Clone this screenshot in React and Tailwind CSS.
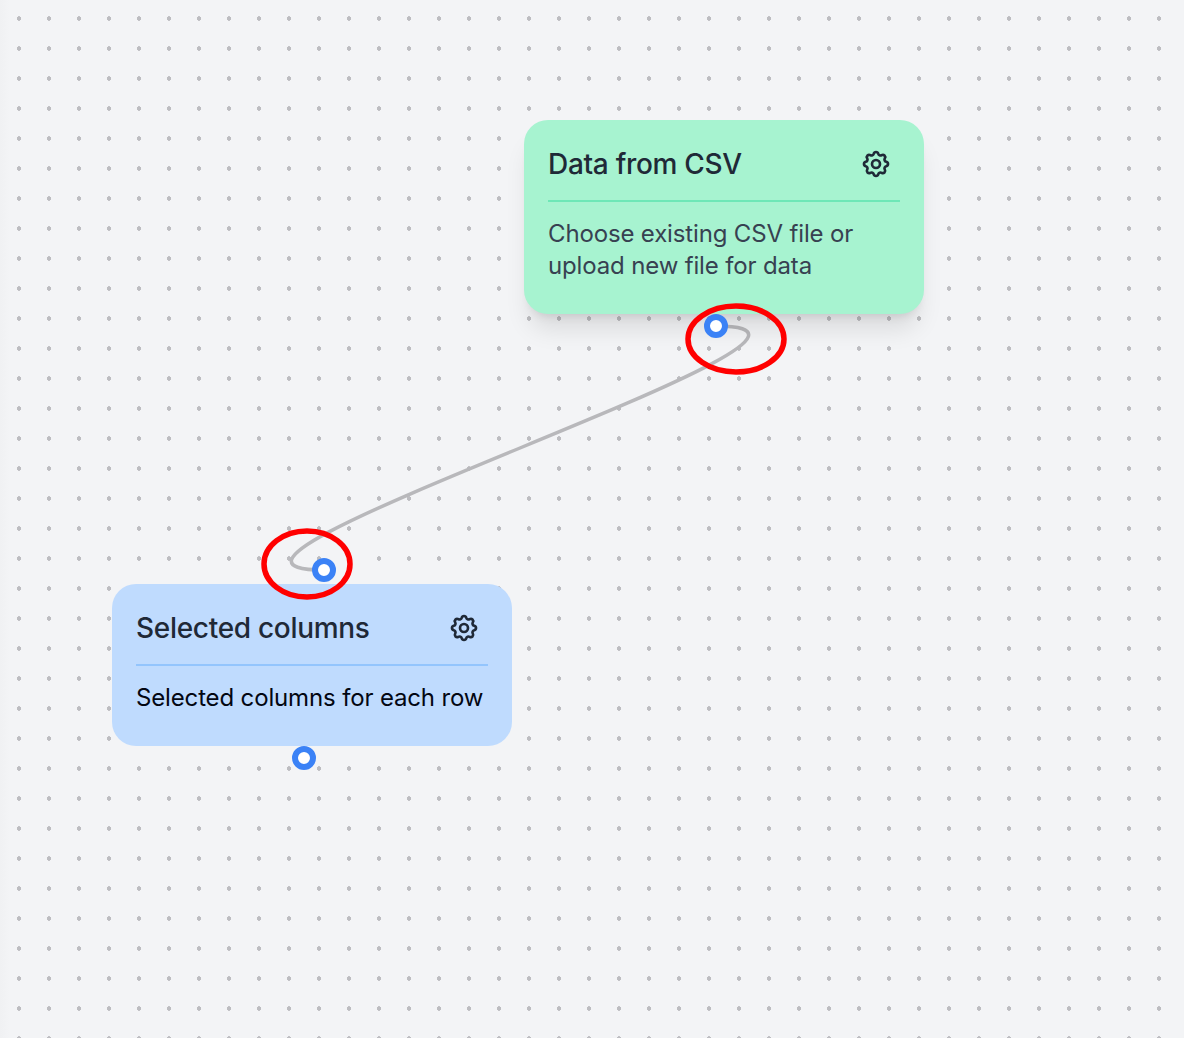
import { HiOutlineCog } from 'react-icons/hi';

const font = { fontFamily: 'Inter, sans-serif' };

function Handle({ className }) {
  return <div className={`absolute w-6 h-6 rounded-full bg-white border-[6px] border-[#3b82f6] ${className}`} />;
}

function Node({ title, className, lineColor, textColor, children }) {
  return (
    <div className={`absolute w-[400px] rounded-3xl px-6 pt-[26px] pb-8 ${className}`}>
      <div className="flex items-center justify-between h-9 mb-[18px]">
        <div className="text-[28px] leading-9 font-medium text-[#1f2937] tracking-[-0.3px]">{title}</div>
        <HiOutlineCog size={32} className="mr-2 text-[#1f2937]" />
      </div>
      <div className={`h-0.5 ${lineColor}`} />
      <div className={`mt-4 text-[24px] leading-8 tracking-[-0.15px] ${textColor}`}>{children}</div>
    </div>
  );
}

export default function App() {
  return (
    <div
      style={font}
      className="relative w-[1184px] h-[1038px] overflow-hidden bg-[#f3f4f6] bg-[radial-gradient(circle_at_19px_18.5px,#bdbdc1_2px,transparent_2.5px)] bg-[length:30px_30px]"
    >
      <div className="absolute inset-y-0 left-0 w-2.5 bg-gradient-to-r from-[#f0f1f3] to-transparent" />

      <svg className="absolute inset-0" width="1184" height="1038" fill="none">
        <path d="M716 326 C916 326 124 570 324 570" stroke="#b8b8bb" strokeWidth="3.5" />
      </svg>

      <Node
        title="Data from CSV"
        className="left-[524px] top-[120px] bg-[#a7f3d0] shadow-[0_20px_25px_-5px_rgba(0,0,0,0.1),0_8px_10px_-6px_rgba(0,0,0,0.1)]"
        lineColor="bg-[#6ee7b7]"
        textColor="text-[#374151]"
      >
        Choose existing CSV file or
        <br />
        upload new file for data
      </Node>
      <Handle className="left-[704px] top-[314px]" />

      <Handle className="left-[312px] top-[558px]" />
      <Node
        title="Selected columns"
        className="left-[112px] top-[584px] bg-[#bfdbfe]"
        lineColor="bg-[#93c5fd]"
        textColor="text-[#030712]"
      >
        Selected columns for each row
      </Node>
      <Handle className="left-[292px] top-[746px]" />

      <svg className="absolute inset-0 pointer-events-none" width="1184" height="1038" fill="none">
        <ellipse cx="736" cy="339" rx="48" ry="33" stroke="#ff0000" strokeWidth="5.5" />
        <ellipse cx="307" cy="564" rx="43" ry="33" stroke="#ff0000" strokeWidth="5.5" />
      </svg>
    </div>
  );
}
